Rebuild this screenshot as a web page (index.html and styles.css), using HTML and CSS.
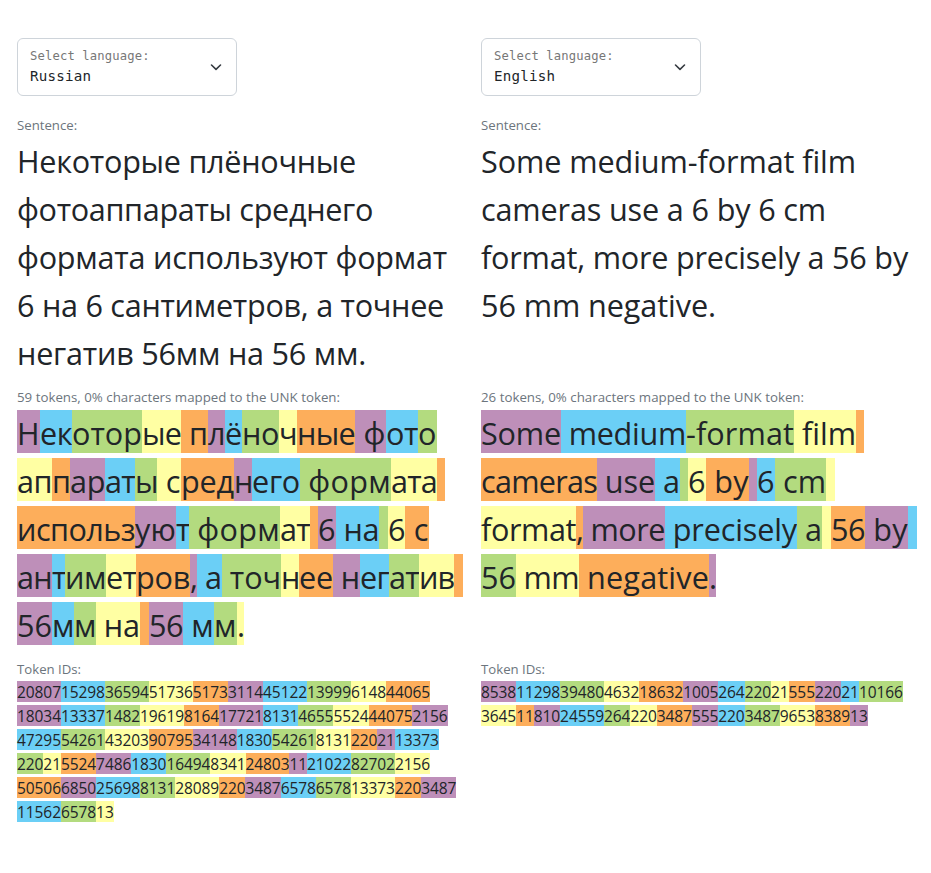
FILE: index.html
```html
<!DOCTYPE html>
<html lang="en">
<head>
<meta charset="utf-8">
<title>Tokenizer comparison</title>
<link rel="stylesheet" href="styles.css">
</head>
<body>
<main class="columns">
  <section class="column" data-lang="ru">
    <div class="select">
      <div class="select-text"><span class="select-label">Select language:</span><span class="select-value">Russian</span></div>
      <svg class="chevron" viewBox="0 0 16 16"><path d="M3.5 6l4.5 4.3 4.5-4.3"/></svg>
    </div>
    <p class="label">Sentence:</p>
    <div class="sentence"></div>
    <p class="label label-tokens">59 tokens, 0% characters mapped to the UNK token:</p>
    <div class="tokens"></div>
    <p class="label label-ids">Token IDs:</p>
    <div class="ids"></div>
  </section>
  <section class="column" data-lang="en">
    <div class="select">
      <div class="select-text"><span class="select-label">Select language:</span><span class="select-value">English</span></div>
      <svg class="chevron" viewBox="0 0 16 16"><path d="M3.5 6l4.5 4.3 4.5-4.3"/></svg>
    </div>
    <p class="label">Sentence:</p>
    <div class="sentence"></div>
    <p class="label label-tokens">26 tokens, 0% characters mapped to the UNK token:</p>
    <div class="tokens"></div>
    <p class="label label-ids">Token IDs:</p>
    <div class="ids"></div>
  </section>
</main>
<script src="tokens.js"></script>
</body>
</html>
```
FILE: styles.css
```css
* { box-sizing: border-box; }
body {
  margin: 0;
  background: #fff;
  color: #212529;
  font-family: "Open Sans", "Noto Sans", sans-serif;
}
.columns {
  display: grid;
  grid-template-columns: 448px 448px;
  column-gap: 16px;
  padding: 38px 0 0 17px;
}
.select {
  width: 220px;
  height: 58px;
  border: 1px solid #ced4da;
  border-radius: 6px;
  padding: 7px 12px;
  display: flex;
  align-items: center;
  justify-content: space-between;
  font-family: "DejaVu Sans Mono", monospace;
}
.select-text { display: flex; flex-direction: column; padding-bottom: 3px; }
.select-label { font-size: 12.2px; letter-spacing: 0.14px; line-height: 20px; color: #777; }
.select-value { font-size: 14.2px; letter-spacing: 0.22px; line-height: 20px; }
.chevron { width: 16px; height: 16px; fill: none; stroke: #343a40; stroke-width: 1.6; stroke-linecap: round; stroke-linejoin: round; }
.label {
  margin: 19px 0 0;
  height: 21px;
  line-height: 21px;
  font-size: 13.2px;
  color: #6c757d;
  white-space: nowrap;
}
.label-tokens { margin-top: 0; font-size: 13.3px; }
.label-ids { margin-top: 6px; }
.sentence { height: 251px; padding-top: 1px; }
.row { display: flex; white-space: pre; }
.sentence .row { height: 48px; line-height: 48px; font-size: 30.6px; }
.tokens { height: 245px; padding-top: 2px; font-size: 30.6px; }
.tokens .row { height: 43px; line-height: 46px; margin-bottom: 5px; }
.ids { padding-top: 1px; font-size: 15.5px; }
.ids .row { height: 21px; line-height: 22px; margin-bottom: 3px; }
.fit { flex: none; display: block; height: 100%; }
.tone-0 { background: #be8fb9; }
.tone-1 { background: #6bcff6; }
.tone-2 { background: #b3db7f; }
.tone-3 { background: #ffffa3; }
.tone-4 { background: #fdae5b; }
```
FILE: tokens.js
```js
// Each piece is [text, width]; a third value marks a leading space whose
// token continues on the next row.
const data = {
  ru: {
    sentence: [
      [["Некоторые плёночные", 339]],
      [["фотоаппараты среднего", 356]],
      [["формата используют формат", 430]],
      [["6 на 6 сантиметров, а точнее", 427]],
      [["негатив 56мм на 56 мм.", 349]]
    ],
    tokens: [
      [["Н",23],["ек",32],["отор",70],["ые",39],[" п",27],["л",17],["ё",17],["но",37],["ч",18],["ные",58],[" ф",31],["от",32],["о",19]],
      [["ап",35],["п",18],["ар",35],["ат",30],["ы",22],[" с",24],["ред",53],["н",18],["его",48],[" форм",91],["ата",46],[" ",8,true]],
      [["использ",118],["ую",41],["т",13],[" форм",91],["ат",30],[" ",8],["6",18],[" на",43],[" ",9],["6",17],[" с",24]],
      [["ан",35],["т",13],["им",41],["ет",30],["ров",54],[",",7],[" а",25],[" точ",59],["н",18],["ее",34],[" н",27],["ег",29],["ат",30],["ив",35],[" ",9]],
      [["56",35],["м",22],["м",22],[" на",44],[" ",9],["56",34],[" м",31],["м",23],[".",7]]
    ],
    ids: [
      "20807 15298 36594 51736 5173 3114 45122 13999 6148 44065",
      "18034 13337 1482 19619 8164 17721 8131 4655 5524 44075 2156",
      "47295 54261 43203 90795 34148 1830 54261 8131 220 21 13373",
      "220 21 5524 7486 1830 16494 8341 24803 11 21022 82702 2156",
      "50506 6850 25698 8131 28089 220 3487 6578 6578 13373 220 3487",
      "11562 6578 13"
    ]
  },
  en: {
    sentence: [
      [["Some medium-format film", 375]],
      [["cameras use a 6 by 6 cm", 345]],
      [["format, more precisely a 56 by", 427]],
      [["56 mm negative.", 235]]
    ],
    tokens: [
      [["Some",80],[" medium",125],["-format",108],[" film",62],[" ",8,true]],
      [["cameras",116],[" use",58],[" a",25],[" ",8],["6",18],[" by",43],[" ",8],["6",18],[" cm",51],[" ",9,true]],
      [["format",95],[",",7],[" more",82],[" precisely",132],[" a",25],[" ",9],["56",34],[" by",43],[" ",9]],
      [["56",35],[" mm",63],[" negative",130],[".",7]]
    ],
    ids: [
      "8538 11298 39480 4632 18632 1005 264 220 21 555 220 21 10166",
      "3645 11 810 24559 264 220 3487 555 220 3487 9653 8389 13"
    ]
  }
};

const DIGIT = 8.79;

// Spread the letters of an element evenly over the given width.
function fit(el, width) {
  const natural = el.getBoundingClientRect().width;
  el.style.letterSpacing = (width - natural) / el.textContent.length + "px";
  el.style.width = width + "px";
}

function render(host, rows, toned) {
  let index = 0;
  rows.forEach(row => {
    const line = document.createElement("div");
    line.className = "row";
    host.append(line);
    row.forEach(([text, width, continues]) => {
      const el = document.createElement("span");
      el.className = toned ? "fit tone-" + (index % 5) : "fit";
      if (!continues) index++;
      el.textContent = text;
      line.append(el);
      fit(el, width);
    });
  });
}

for (const column of document.querySelectorAll(".column")) {
  const d = data[column.dataset.lang];
  render(column.querySelector(".sentence"), d.sentence, false);
  render(column.querySelector(".tokens"), d.tokens, true);
  render(column.querySelector(".ids"), d.ids.map(r => r.split(" ").map(t => [t, t.length * DIGIT])), true);
}
```
